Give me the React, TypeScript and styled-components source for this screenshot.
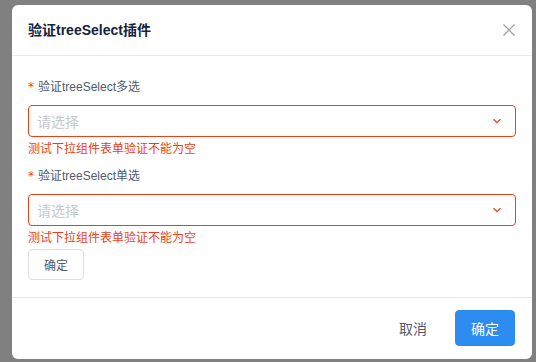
import React from "react";
import styled, { createGlobalStyle } from "styled-components";

const Global = createGlobalStyle`
  html, body { margin: 0; padding: 0; }
  body {
    background: #808080;
    font-family: "Liberation Sans", "Noto Sans CJK SC", sans-serif;
    width: 536px;
    height: 362px;
    overflow: hidden;
  }
`;

const Stage = styled.div`
  padding: 5px 0 0 12px;
`;

const Dialog = styled.div`
  width: 520px;
  height: 354px;
  box-sizing: border-box;
  background: #fff;
  border-radius: 6px;
  display: flex;
  flex-direction: column;
`;

const Header = styled.div`
  display: flex;
  align-items: center;
  justify-content: space-between;
  padding: 15px 16px;
  border-bottom: 1px solid #e8eaec;
`;

const Title = styled.div`
  font-size: 14px;
  line-height: 20px;
  font-weight: 700;
  color: #17233d;
`;

const Close = styled.span`
  display: flex;
  width: 14px;
  height: 14px;
`;

const Body = styled.div`
  padding: 21px 16px 17px;
  border-bottom: 1px solid #e8eaec;
  display: flex;
  flex-direction: column;
`;

const Field = styled.div`
  display: flex;
  flex-direction: column;
  & + & {
    margin-top: 7px;
  }
`;

const Label = styled.label`
  font-size: 12px;
  line-height: 20px;
  color: #515a6e;
  margin-bottom: 8px;
  &::before {
    content: "*";
    display: inline-block;
    margin-right: 4px;
    color: #ed4014;
    font-size: 12px;
    font-family: "DejaVu Sans", sans-serif;
  }
`;

const Select = styled.div<{ $error?: boolean }>`
  height: 32px;
  box-sizing: border-box;
  border: 1px solid ${(p) => (p.$error ? "#ed4014" : "#dcdee2")};
  border-radius: 4px;
  display: flex;
  align-items: center;
  justify-content: space-between;
  padding: 0 12px 0 8px;
`;

const Placeholder = styled.span`
  font-size: 14px;
  color: #c5c8ce;
`;

const ErrorTip = styled.div`
  font-size: 12px;
  line-height: 20px;
  padding-top: 2px;
  color: #ed4014;
`;

const Button = styled.button<{ $primary?: boolean; $text?: boolean; $large?: boolean }>`
  box-sizing: border-box;
  height: ${(p) => (p.$large ? "36px" : "31px")};
  padding: 0 15px;
  font-family: inherit;
  font-size: ${(p) => (p.$large ? "14px" : "12px")};
  border-radius: 4px;
  cursor: pointer;
  border: 1px solid
    ${(p) => (p.$primary ? "#2d8cf0" : p.$text ? "transparent" : "#dcdee2")};
  background: ${(p) => (p.$primary ? "#2d8cf0" : p.$text ? "transparent" : "#fff")};
  color: ${(p) => (p.$primary ? "#fff" : "#515a6e")};
`;

const SubmitRow = styled.div`
  display: flex;
  margin-top: 1px;
`;

const Footer = styled.div`
  display: flex;
  justify-content: flex-end;
  align-items: center;
  gap: 12px;
  padding: 12px 17px 12px 16px;
`;

const Chevron = () => (
  <svg width="12" height="12" viewBox="0 0 12 12" fill="none">
    <path d="M2.5 4.2 L6 7.6 L9.5 4.2" stroke="#ed4014" strokeWidth="1.3" />
  </svg>
);

const CloseIcon = () => (
  <svg width="14" height="14" viewBox="0 0 14 14" fill="none">
    <path d="M1.5 1.5 L12.5 12.5 M12.5 1.5 L1.5 12.5" stroke="#999" strokeWidth="1.2" />
  </svg>
);

export default function App() {
  return (
    <>
      <Global />
      <Stage>
        <Dialog>
          <Header>
            <Title>验证treeSelect插件</Title>
            <Close>
              <CloseIcon />
            </Close>
          </Header>
          <Body>
            <Field>
              <Label>验证treeSelect多选</Label>
              <Select $error>
                <Placeholder>请选择</Placeholder>
                <Chevron />
              </Select>
              <ErrorTip>测试下拉组件表单验证不能为空</ErrorTip>
            </Field>
            <Field>
              <Label>验证treeSelect单选</Label>
              <Select $error>
                <Placeholder>请选择</Placeholder>
                <Chevron />
              </Select>
              <ErrorTip>测试下拉组件表单验证不能为空</ErrorTip>
            </Field>
            <SubmitRow>
              <Button>确定</Button>
            </SubmitRow>
          </Body>
          <Footer>
            <Button $text $large>取消</Button>
            <Button $primary $large>确定</Button>
          </Footer>
        </Dialog>
      </Stage>
    </>
  );
}
